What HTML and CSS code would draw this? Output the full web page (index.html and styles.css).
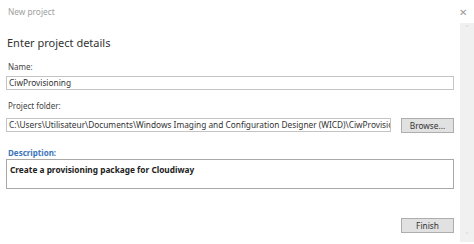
FILE: index.html
```html
<!DOCTYPE html>
<html lang="en">
<head>
    <meta charset="UTF-8">
    <title>New project</title>
    <link rel="stylesheet" href="styles.css">
</head>
<body>
    <div class="dialog">
        <!-- Title bar -->
        <div class="titlebar">
            <span class="title">New project</span>
            <span class="close">&#x2715;</span>
        </div>

        <div class="body">
            <div class="content">
                <h1>Enter project details</h1>

                <label class="field-label name">Name:</label>
                <div class="textbox">CiwProvisioning</div>

                <label class="field-label">Project folder:</label>
                <div class="row">
                    <div class="textbox folder">C:\Users\Utilisateur\Documents\Windows Imaging and Configuration Designer (WICD)\CiwProvisioning</div>
                    <button class="btn">Browse...</button>
                </div>

                <label class="field-label active">Description:</label>
                <div class="textarea">Create a provisioning package for Cloudiway</div>

                <div class="footer">
                    <button class="btn">Finish</button>
                </div>
            </div>

            <!-- Scrollbar -->
            <div class="scrollbar">
                <span class="arrow">&#x02C4;</span>
                <span class="arrow">&#x02C5;</span>
            </div>
        </div>
    </div>
</body>
</html>
```

FILE: styles.css
```css
/* Dialog styles */
body {
    font-family: 'Noto Sans', 'Liberation Sans', sans-serif;
    background-color: #fff;
    margin: 0;
    padding: 0;
    width: 474px;
    height: 244px;
    overflow: hidden;
}

.dialog {
    display: flex;
    flex-direction: column;
    height: 244px;
}

.titlebar {
    display: flex;
    justify-content: space-between;
    align-items: center;
    height: 23px;
    padding: 0 7px 0 8px;
}

.title {
    font-size: 8.3px;
    color: #a0a0a0;
}

.close {
    font-size: 10px;
    color: #9a9a9a;
}

.body {
    display: flex;
    flex: 1;
    min-height: 0;
}

.content {
    flex: 1;
    min-width: 0;
    padding: 0 6px;
    display: flex;
    flex-direction: column;
}

h1 {
    font-size: 11px;
    line-height: 16px;
    font-weight: normal;
    color: #333;
    margin: 12px 0 0 1px;
}

.field-label {
    display: block;
    font-size: 8px;
    line-height: 11px;
    color: #444;
    margin: 10px 0 0 2px;
}

.field-label.name {
    margin-top: 10px;
}

.field-label.active {
    color: #3b74ba;
    font-weight: bold;
    margin-top: 14px;
}

.textbox {
    height: 12px;
    line-height: 12px;
    border: 1px solid #c4c4c4;
    font-size: 8.3px;
    color: #333;
    padding: 0 2px;
    margin-top: 4px;
    white-space: nowrap;
    overflow: hidden;
}

.row {
    display: flex;
    align-items: flex-start;
    gap: 10px;
    margin-top: 7px;
}

.row .textbox {
    flex: 1;
    min-width: 0;
    margin-top: 0;
}

.btn {
    font-family: inherit;
    font-size: 8.3px;
    color: #333;
    background-color: #e1e1e1;
    border: 1px solid #adadad;
    width: 53px;
    height: 15px;
    padding: 0;
}

.textarea {
    border: 1px solid #a8a8a8;
    font-size: 8.3px;
    font-weight: bold;
    color: #222;
    padding: 4px 3px 2px;
    box-sizing: border-box;
    height: 30px;
    margin-top: 1px;
}

.footer {
    display: flex;
    justify-content: flex-end;
    margin-top: 29px;
}

.scrollbar {
    width: 14px;
    background-color: #f0f0f0;
    display: flex;
    flex-direction: column;
    justify-content: space-between;
    align-items: center;
    margin-bottom: 2px;
}

.arrow {
    font-size: 9px;
    color: #c8c8c8;
    line-height: 12px;
}
```
